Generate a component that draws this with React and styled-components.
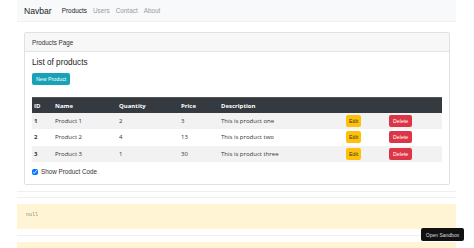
import React, { useState } from 'react'
import styled, { createGlobalStyle } from 'styled-components'

const GlobalStyle = createGlobalStyle`
  body {
    margin: 0;
    background: #fff;
    font-family: "Liberation Sans", Arial, sans-serif;
    color: #212529;
  }
`

const Page = styled.div`
  width: 439px;
  margin-left: 17px;
`

const Navbar = styled.nav`
  height: 22px;
  background: #f8f9fa;
  display: flex;
  align-items: center;
  padding-left: 7px;
  border-bottom: 1px solid #f1f1f1;
  box-sizing: border-box;
`

const Brand = styled.span`
  font-size: 8.6px;
  color: #222;
  margin-right: 10px;
`

const NavLink = styled.span`
  font-size: 6.4px;
  margin-right: 6px;
  color: ${(p) => (p.$active ? '#222' : '#9a9a9a')};
`

const Card = styled.div`
  margin: 10px 6px 0 7px;
  border: 1px solid #e1e1e1;
  border-radius: 2px;
  background: #fff;
`

const CardHeader = styled.div`
  height: 18px;
  background: #f7f7f7;
  border-bottom: 1px solid #e4e4e4;
  display: flex;
  align-items: center;
  padding-left: 7px;
  font-size: 6.3px;
  color: #333;
`

const CardBody = styled.div`
  padding: 5px 7px 8px 7px;
`

const Title = styled.h5`
  margin: 0 0 5px 0;
  font-weight: normal;
  font-size: 8.2px;
  line-height: 11px;
  color: #222;
`

const Button = styled.button`
  display: block;
  border: none;
  border-radius: 2px;
  font-family: "Liberation Sans", Arial, sans-serif;
  font-size: 5.3px;
  padding: 0 ${(p) => p.$px || 4}px;
  height: ${(p) => p.$h || 12}px;
  background: ${(p) => p.$bg};
  color: ${(p) => p.$fg || '#fff'};
  cursor: pointer;
`

const Table = styled.table`
  margin-top: 12px;
  width: 410px;
  border-collapse: collapse;
  table-layout: fixed;
  font-family: "Open Sans", "Liberation Sans", sans-serif;
  font-size: 6px;
  color: #333;
`

const Th = styled.th`
  background: #343a40;
  color: #fff;
  text-align: left;
  font-weight: bold;
  height: 15px;
  padding: 0 2px;
  border-top: 1px solid #555;
`

const Tr = styled.tr`
  background: ${(p) => (p.$striped ? '#f2f2f2' : '#fff')};
`

const Td = styled.td`
  height: 16.3px;
  padding: 0 2px;
  font-weight: ${(p) => (p.$bold ? 'bold' : 'normal')};
`

const CheckRow = styled.label`
  display: flex;
  align-items: center;
  gap: 3px;
  margin-top: 6px;
  height: 8px;
  font-size: 6.3px;
  color: #333;
  input {
    margin: 0;
    width: 6px;
    height: 6px;
  }
`

const Rule = styled.div`
  height: 1px;
  background: #f0f0f0;
  margin-top: ${(p) => p.$mt}px;
`

const Output = styled.div`
  margin-top: ${(p) => p.$mt}px;
  height: ${(p) => p.$h}px;
  background: #fff4d4;
  padding: 8px 9px 0;
  box-sizing: border-box;
  font-family: "Liberation Mono", monospace;
  font-size: 5px;
  color: #888;
`

const SandboxButton = styled.div`
  position: fixed;
  left: 421px;
  top: 228px;
  width: 43px;
  height: 13px;
  background: #111;
  border-radius: 2px;
  color: #ddd;
  font-size: 5px;
  display: flex;
  align-items: center;
  justify-content: center;
  white-space: nowrap;
`

const products = [
  { id: 1, name: 'Product 1', qty: 2, price: 3, desc: 'This is product one' },
  { id: 2, name: 'Product 2', qty: 4, price: 13, desc: 'This is product two' },
  { id: 3, name: 'Product 3', qty: 1, price: 30, desc: 'This is product three' },
]

const App = () => {
  const [showCode, setShowCode] = useState(true)

  return (
    <>
      <GlobalStyle />
      <Page>
        <Navbar>
          <Brand>Navbar</Brand>
          <NavLink $active>Products</NavLink>
          <NavLink>Users</NavLink>
          <NavLink>Contact</NavLink>
          <NavLink>About</NavLink>
        </Navbar>
        <Card>
          <CardHeader>Products Page</CardHeader>
          <CardBody>
            <Title>List of products</Title>
            <Button $bg="#17a2b8" $h={12} $px={4}>New Product</Button>
            <Table>
              <colgroup>
                <col style={{ width: 21 }} />
                <col style={{ width: 64 }} />
                <col style={{ width: 62 }} />
                <col style={{ width: 40 }} />
                <col style={{ width: 125 }} />
                <col style={{ width: 43 }} />
                <col style={{ width: 55 }} />
              </colgroup>
              <thead>
                <tr>
                  <Th>ID</Th>
                  <Th>Name</Th>
                  <Th>Quantity</Th>
                  <Th>Price</Th>
                  <Th>Description</Th>
                  <Th />
                  <Th />
                </tr>
              </thead>
              <tbody>
                {products.map((p, i) => (
                  <Tr key={p.id} $striped={i % 2 === 0}>
                    <Td $bold>{p.id}</Td>
                    <Td>{p.name}</Td>
                    <Td>{p.qty}</Td>
                    <Td>{p.price}</Td>
                    <Td>{p.desc}</Td>
                    <Td>
                      <Button $bg="#ffc107" $fg="#333" $h={12} $px={3}>Edit</Button>
                    </Td>
                    <Td>
                      <Button $bg="#dc3545" $h={12} $px={4}>Delete</Button>
                    </Td>
                  </Tr>
                ))}
              </tbody>
            </Table>
            <CheckRow>
              <input type="checkbox" checked={showCode} onChange={() => setShowCode(!showCode)} />
              Show Product Code
            </CheckRow>
          </CardBody>
        </Card>
        <Rule $mt={6} />
        <Rule $mt={5} />
        <Output $mt={6} $h={25}>null</Output>
        <Rule $mt={6} />
        <Output $mt={6} $h={4} />
      </Page>
      <SandboxButton>Open Sandbox</SandboxButton>
    </>
  )
}

export default App
